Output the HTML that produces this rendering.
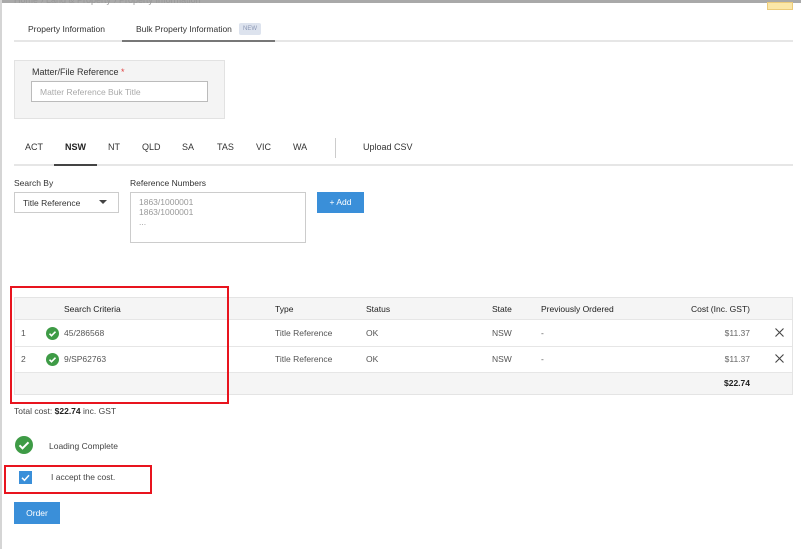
<!DOCTYPE html>
<html><head><meta charset="utf-8"><style>
*{box-sizing:border-box;margin:0;padding:0}
body{width:801px;height:549px;background:#fff;font-family:"Liberation Sans",sans-serif;font-size:9px;color:#333;position:relative;overflow:hidden}
.a{position:absolute;white-space:nowrap}
</style></head><body>
<div class="a" style="left:0;top:0;width:801px;height:3px;background:#a9a9a9"></div>
<div class="a" style="left:0;top:0;width:2px;height:549px;background:#d5d5d5"></div>
<div class="a" style="left:14px;top:-5px;color:#999;font-size:9px">Home › Land &amp; Property › Property Information</div>
<div class="a" style="left:767px;top:2px;width:26px;height:8px;background:#fbe7a8;border:1px solid #eccb7a"></div>

<div class="a" style="left:28px;top:24px;font-size:8.5px;color:#333">Property Information</div>
<div class="a" style="left:136px;top:24px;font-size:8.5px;color:#333">Bulk Property Information</div>
<div class="a" style="left:239px;top:23px;width:22px;height:12px;background:#dde3ee;color:#8a96b4;font-size:6px;line-height:12px;text-align:center;border-radius:2px">NEW</div>
<div class="a" style="left:14px;top:40px;width:779px;height:2px;background:#e6e6e6"></div>
<div class="a" style="left:122px;top:40px;width:153px;height:2px;background:#777"></div>

<div class="a" style="left:14px;top:60px;width:211px;height:59px;background:#f4f4f4;border:1px solid #e2e2e2"></div>
<div class="a" style="left:32px;top:67px;font-size:9px;color:#333">Matter/File Reference <span style="color:#e04040">*</span></div>
<div class="a" style="left:31px;top:81px;width:177px;height:21px;background:#fff;border:1px solid #bbb;color:#aaa;font-size:8.5px;padding:5px 8px">Matter Reference Buk Title</div>

<div class="a" style="left:25px;top:142px;font-size:9px">ACT</div>
<div class="a" style="left:65px;top:142px;font-size:9px;font-weight:bold;color:#222">NSW</div>
<div class="a" style="left:108px;top:142px;font-size:9px">NT</div>
<div class="a" style="left:142px;top:142px;font-size:9px">QLD</div>
<div class="a" style="left:182px;top:142px;font-size:9px">SA</div>
<div class="a" style="left:217px;top:142px;font-size:9px">TAS</div>
<div class="a" style="left:256px;top:142px;font-size:9px">VIC</div>
<div class="a" style="left:293px;top:142px;font-size:9px">WA</div>
<div class="a" style="left:335px;top:138px;width:1px;height:20px;background:#ccc"></div>
<div class="a" style="left:363px;top:142px;font-size:9px">Upload CSV</div>
<div class="a" style="left:14px;top:164px;width:779px;height:2px;background:#e6e6e6"></div>
<div class="a" style="left:54px;top:164px;width:43px;height:2px;background:#444"></div>

<div class="a" style="left:14px;top:178px;font-size:8.5px">Search By</div>
<div class="a" style="left:14px;top:192px;width:105px;height:21px;border:1px solid #ccc;font-size:8.5px;padding:5px 8px">Title Reference</div>
<div class="a" style="left:99px;top:200px;width:0;height:0;border-left:4px solid transparent;border-right:4px solid transparent;border-top:4px solid #444"></div>
<div class="a" style="left:130px;top:178px;font-size:8.5px">Reference Numbers</div>
<div class="a" style="left:130px;top:192px;width:176px;height:51px;border:1px solid #ccc;font-size:8.5px;color:#999;padding:4px 8px;line-height:10px;white-space:normal">1863/1000001<br>1863/1000001<br>...</div>
<div class="a" style="left:317px;top:192px;width:47px;height:21px;background:#3a8fd9;color:#fff;font-size:8.5px;line-height:21px;text-align:center">+ Add</div>

<div class="a" style="left:14px;top:297px;width:779px;height:98px;border:1px solid #e4e4e4"></div>
<div class="a" style="left:15px;top:298px;width:777px;height:22px;background:#f5f5f5;border-bottom:1px solid #e6e6e6"></div>
<div class="a" style="left:15px;top:346px;width:777px;height:1px;background:#e6e6e6"></div>
<div class="a" style="left:15px;top:372px;width:777px;height:22px;background:#f5f5f5;border-top:1px solid #e6e6e6"></div>
<div class="a" style="left:64px;top:304px;font-size:8.5px;color:#222">Search Criteria</div>
<div class="a" style="left:275px;top:304px;font-size:8.5px;color:#222">Type</div>
<div class="a" style="left:366px;top:304px;font-size:8.5px;color:#222">Status</div>
<div class="a" style="left:492px;top:304px;font-size:8.5px;color:#222">State</div>
<div class="a" style="left:541px;top:304px;font-size:8.5px;color:#222">Previously Ordered</div>
<div class="a" style="left:690px;top:304px;width:60px;text-align:right;font-size:8.5px;color:#222">Cost (Inc. GST)</div>

<div class="a" style="left:21px;top:328px;font-size:8.5px;color:#555">1</div>
<svg class="a" style="left:46px;top:327px" width="13" height="13" viewBox="0 0 13 13"><circle cx="6.5" cy="6.5" r="6.5" fill="#3e9b46"/><path d="M3.5 6.7l2 2 4-4" stroke="#fff" stroke-width="1.6" fill="none"/></svg>
<div class="a" style="left:64px;top:328px;font-size:8.5px;color:#555">45/286568</div>
<div class="a" style="left:275px;top:328px;font-size:8.5px;color:#555">Title Reference</div>
<div class="a" style="left:366px;top:328px;font-size:8.5px;color:#555">OK</div>
<div class="a" style="left:492px;top:328px;font-size:8.5px;color:#555">NSW</div>
<div class="a" style="left:541px;top:328px;font-size:8.5px;color:#555">-</div>
<div class="a" style="left:690px;top:328px;width:60px;text-align:right;font-size:8.5px;color:#666">$11.37</div>
<svg class="a" style="left:775px;top:328px" width="9" height="9"><path d="M0.5 0.5l8 8M8.5 0.5l-8 8" stroke="#444" stroke-width="1.1"/></svg>

<div class="a" style="left:21px;top:354px;font-size:8.5px;color:#555">2</div>
<svg class="a" style="left:46px;top:353px" width="13" height="13" viewBox="0 0 13 13"><circle cx="6.5" cy="6.5" r="6.5" fill="#3e9b46"/><path d="M3.5 6.7l2 2 4-4" stroke="#fff" stroke-width="1.6" fill="none"/></svg>
<div class="a" style="left:64px;top:354px;font-size:8.5px;color:#555">9/SP62763</div>
<div class="a" style="left:275px;top:354px;font-size:8.5px;color:#555">Title Reference</div>
<div class="a" style="left:366px;top:354px;font-size:8.5px;color:#555">OK</div>
<div class="a" style="left:492px;top:354px;font-size:8.5px;color:#555">NSW</div>
<div class="a" style="left:541px;top:354px;font-size:8.5px;color:#555">-</div>
<div class="a" style="left:690px;top:354px;width:60px;text-align:right;font-size:8.5px;color:#666">$11.37</div>
<svg class="a" style="left:775px;top:354px" width="9" height="9"><path d="M0.5 0.5l8 8M8.5 0.5l-8 8" stroke="#444" stroke-width="1.1"/></svg>
<div class="a" style="left:690px;top:378px;width:60px;text-align:right;font-size:8.5px;font-weight:bold;color:#222">$22.74</div>

<div class="a" style="left:10px;top:286px;width:219px;height:118px;border:2px solid #e8141e"></div>

<div class="a" style="left:14px;top:406px;font-size:8.5px;color:#444">Total cost: <b style="color:#222">$22.74</b> inc. GST</div>
<svg class="a" style="left:15px;top:436px" width="18" height="18" viewBox="0 0 18 18"><circle cx="9" cy="9" r="9" fill="#3e9b46"/><path d="M4.5 9.3l3 3 6-6" stroke="#fff" stroke-width="2" fill="none"/></svg>
<div class="a" style="left:49px;top:441px;font-size:8.5px;color:#444">Loading Complete</div>

<div class="a" style="left:4px;top:465px;width:148px;height:29px;border:2px solid #e8141e"></div>
<svg class="a" style="left:19px;top:471px" width="13" height="13"><rect width="13" height="13" fill="#3a8fd9"/><path d="M3 6.8l2.5 2.5 4.5-5" stroke="#fff" stroke-width="1.5" fill="none"/></svg>
<div class="a" style="left:51px;top:472px;font-size:8.5px;color:#444">I accept the cost.</div>

<div class="a" style="left:14px;top:502px;width:46px;height:22px;background:#3a8fd9;color:#fff;font-size:8.5px;line-height:22px;text-align:center">Order</div>
</body></html>
